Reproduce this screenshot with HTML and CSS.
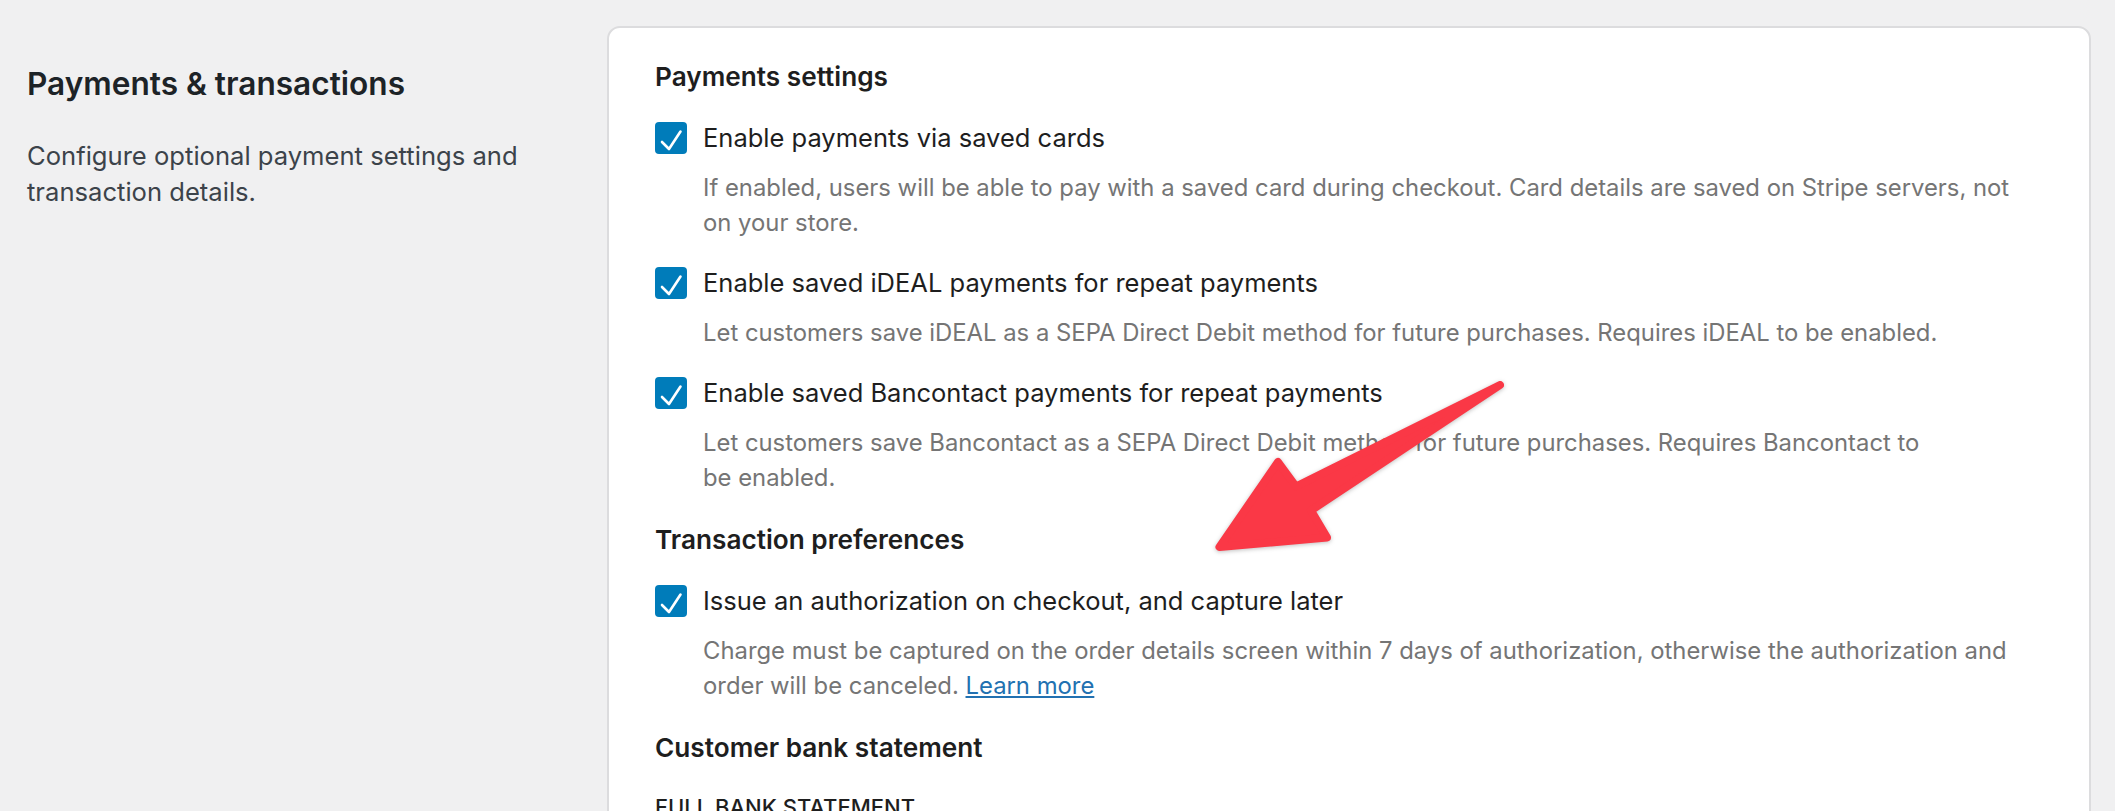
FILE: index.html
```html
<!DOCTYPE html>
<html lang="en">
<head>
    <meta charset="UTF-8">
    <meta name="viewport" content="width=device-width, initial-scale=1.0">
    <title>Payments &amp; transactions</title>
    <link rel="stylesheet" href="styles.css">
</head>
<body>
    <div class="page">
        <div class="intro">
            <h2 class="intro-title">Payments &amp; transactions</h2>
            <p class="intro-text">Configure optional payment settings and transaction details.</p>
        </div>

        <section class="card">
            <h3 class="group-title">Payments settings</h3>

            <div class="option">
                <label class="check-row">
                    <span class="checkbox"><svg viewBox="0 0 32 32"><path d="M7 20l7 7L25.5 9.5"/></svg></span>
                    Enable payments via saved cards
                </label>
                <p class="help">If enabled, users will be able to pay with a saved card during checkout. Card details are saved on Stripe servers, not on your store.</p>
            </div>

            <div class="option">
                <label class="check-row">
                    <span class="checkbox"><svg viewBox="0 0 32 32"><path d="M7 20l7 7L25.5 9.5"/></svg></span>
                    Enable saved iDEAL payments for repeat payments
                </label>
                <p class="help">Let customers save iDEAL as a SEPA Direct Debit method for future purchases. Requires iDEAL to be enabled.</p>
            </div>

            <div class="option">
                <label class="check-row">
                    <span class="checkbox"><svg viewBox="0 0 32 32"><path d="M7 20l7 7L25.5 9.5"/></svg></span>
                    Enable saved Bancontact payments for repeat payments
                </label>
                <p class="help narrow">Let customers save Bancontact as a SEPA Direct Debit method for future purchases. Requires Bancontact to be enabled.</p>
            </div>

            <h3 class="group-title">Transaction preferences</h3>

            <div class="option">
                <label class="check-row">
                    <span class="checkbox"><svg viewBox="0 0 32 32"><path d="M7 20l7 7L25.5 9.5"/></svg></span>
                    Issue an authorization on checkout, and capture later
                </label>
                <p class="help">Charge must be captured on the order details screen within 7 days of authorization, otherwise the authorization and order will be canceled. <a href="#">Learn more</a></p>
            </div>

            <h3 class="group-title">Customer bank statement</h3>
            <div class="field-label">Full bank statement</div>
        </section>
    </div>

    <!-- annotation arrow drawn over the page -->
    <svg class="arrow" viewBox="1190 360 340 210">
        <polygon points="1500,385 1296,486.5 1278,462 1219.5,547 1327,537.5 1311,510.5"/>
    </svg>
</body>
</html>
```

FILE: styles.css
```css
* {
    margin: 0;
    padding: 0;
    box-sizing: border-box;
}

body {
    background-color: #f0f0f1;
    font-family: Inter, "Noto Sans", sans-serif;
    color: #1e1e1e;
    position: relative;
    overflow: hidden;
    height: 811px;
}

.page {
    display: flex;
    padding: 26px 24px 0 27px;
}

.intro {
    flex: 0 0 530px;
    margin-right: 50px;
    padding-top: 38px;
}

.intro-title {
    font-size: 31.6px;
    font-weight: 600;
    line-height: 40px;
    color: #1d2327;
}

.intro-text {
    margin-top: 34px;
    font-size: 25.6px;
    line-height: 36.4px;
    color: #3c434a;
}

.card {
    flex: 1;
    background-color: #fff;
    border: 2px solid #dcdcde;
    border-radius: 13px;
    padding: 31px 46px 80px;
    display: flex;
    flex-direction: column;
    gap: 27px;
}

.group-title {
    font-size: 26.2px;
    font-weight: 600;
    line-height: 36px;
}

.option {
    display: flex;
    flex-direction: column;
    gap: 16px;
}

.check-row {
    display: flex;
    align-items: center;
    gap: 16px;
    font-size: 25.5px;
    line-height: 32px;
}

.checkbox {
    flex: none;
    display: flex;
    width: 32px;
    height: 32px;
    border-radius: 4px;
    background-color: #007cba;
}

.checkbox svg {
    width: 32px;
    height: 32px;
    fill: none;
    stroke: #fff;
    stroke-width: 2.6;
    stroke-linecap: round;
    stroke-linejoin: round;
}

.help {
    margin-left: 48px;
    max-width: 1320px;
    font-size: 23.85px;
    line-height: 35px;
    color: #757575;
}

.help.narrow {
    max-width: 1240px;
}

.help a {
    color: #2271b1;
}

.field-label {
    font-size: 22px;
    line-height: 28px;
    font-weight: 500;
    text-transform: uppercase;
}

.arrow {
    position: absolute;
    left: 1190px;
    top: 360px;
    width: 340px;
    height: 210px;
    overflow: visible;
    filter: drop-shadow(0 1px 2px rgba(0, 0, 0, 0.25));
}

.arrow polygon {
    fill: #fa3846;
    stroke: #fa3846;
    stroke-width: 8;
    stroke-linejoin: round;
}
```
